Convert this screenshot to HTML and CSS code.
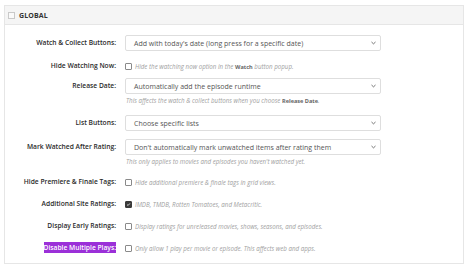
FILE: index.html
```html
<!DOCTYPE html>
<html>
<head>
<meta charset="utf-8">
<link rel="stylesheet" href="styles.css">
</head>
<body>
<div class="panel">
  <div class="panel-head">
    <span class="toggle"></span>
    <span class="panel-title">GLOBAL</span>
  </div>
  <div class="form">
    <div class="row sel">
      <div class="label">Watch &amp; Collect Buttons:</div>
      <div class="ctrl">
        <div class="select"><span>Add with today's date (long press for a specific date)</span><svg class="chev" viewBox="0 0 6 4" width="5" height="4"><path d="M0.6 0.8 L3 3 L5.4 0.8" fill="none" stroke="#666" stroke-width="1.1"/></svg></div>
      </div>
    </div>
    <div class="row chk">
      <div class="label">Hide Watching Now:</div>
      <div class="ctrl check-line"><span class="box"></span><span class="help">Hide the watching now option in the <b>Watch</b> button popup.</span></div>
    </div>
    <div class="row sel">
      <div class="label">Release Date:</div>
      <div class="ctrl">
        <div class="select"><span>Automatically add the episode runtime</span><svg class="chev" viewBox="0 0 6 4" width="5" height="4"><path d="M0.6 0.8 L3 3 L5.4 0.8" fill="none" stroke="#666" stroke-width="1.1"/></svg></div>
        <div class="help below">This affects the watch &amp; collect buttons when you choose <b>Release Date</b>.</div>
      </div>
    </div>
    <div class="row sel">
      <div class="label">List Buttons:</div>
      <div class="ctrl">
        <div class="select"><span>Choose specific lists</span><svg class="chev" viewBox="0 0 6 4" width="5" height="4"><path d="M0.6 0.8 L3 3 L5.4 0.8" fill="none" stroke="#666" stroke-width="1.1"/></svg></div>
      </div>
    </div>
    <div class="row sel">
      <div class="label">Mark Watched After Rating:</div>
      <div class="ctrl">
        <div class="select"><span>Don't automatically mark unwatched items after rating them</span><svg class="chev" viewBox="0 0 6 4" width="5" height="4"><path d="M0.6 0.8 L3 3 L5.4 0.8" fill="none" stroke="#666" stroke-width="1.1"/></svg></div>
        <div class="help below">This only applies to movies and episodes you haven't watched yet.</div>
      </div>
    </div>
    <div class="row chk">
      <div class="label">Hide Premiere &amp; Finale Tags:</div>
      <div class="ctrl check-line"><span class="box"></span><span class="help">Hide additional premiere &amp; finale tags in grid views.</span></div>
    </div>
    <div class="row chk">
      <div class="label">Additional Site Ratings:</div>
      <div class="ctrl check-line"><span class="box checked"><svg viewBox="0 0 8 8" width="7" height="7"><path d="M1.8 4.2 L3.3 5.6 L6.2 2.3" fill="none" stroke="#fff" stroke-width="1.3"/></svg></span><span class="help">IMDB, TMDB, Rotten Tomatoes, and Metacritic.</span></div>
    </div>
    <div class="row chk">
      <div class="label">Display Early Ratings:</div>
      <div class="ctrl check-line"><span class="box"></span><span class="help">Display ratings for unreleased movies, shows, seasons, and episodes.</span></div>
    </div>
    <div class="row chk">
      <div class="label"><span class="mark">Disable Multiple Plays:</span></div>
      <div class="ctrl check-line"><span class="box"></span><span class="help">Only allow 1 play per movie or episode. This affects web and apps.</span></div>
    </div>
  </div>
</div>
</body>
</html>
```
FILE: styles.css
```css
html, body {
  margin: 0;
  padding: 0;
  background: #ffffff;
}
body {
  padding: 5px 10px 0 4px;
  font-family: "Open Sans", "Noto Sans", sans-serif;
  color: #333;
}
.panel {
  border: 1px solid #e6e6e6;
  background: #fff;
}
.panel-head {
  height: 18px;
  background: #f5f5f5;
  border-bottom: 1px solid #e6e6e6;
  display: flex;
  align-items: center;
  padding-left: 3px;
  gap: 4px;
}
.toggle {
  width: 5px;
  height: 5px;
  border: 1px solid #c9c9c9;
  background: #fafafa;
}
.panel-title {
  font-size: 7px;
  font-weight: 700;
  color: #333;
  letter-spacing: 0.1px;
}
.form {
  padding: 10px 0 8px 0;
  display: flex;
  flex-direction: column;
}
.row {
  display: grid;
  grid-template-columns: 111px 256px;
  column-gap: 9px;
  align-items: start;
  margin-top: 8px;
}
.row:first-child {
  margin-top: 0;
}
.row.chk + .row.sel {
  margin-top: 5px;
}
.label {
  text-align: right;
  font-size: 6.7px;
  font-weight: 600;
  color: #2b2b2b;
  white-space: nowrap;
}
.row.sel .label {
  line-height: 16px;
}
.row.chk .label {
  line-height: 14px;
}
.mark {
  background: #9b30d8;
  color: #fff;
  padding: 1px 0;
}
.select {
  height: 16px;
  box-sizing: border-box;
  border: 1px solid #dedede;
  border-radius: 2px;
  display: flex;
  align-items: center;
  justify-content: space-between;
  padding: 0 4px 0 8px;
  font-size: 7px;
  color: #555;
  white-space: nowrap;
}
.chev {
  display: block;
}
.check-line {
  height: 14px;
  display: flex;
  align-items: center;
  gap: 3px;
}
.box {
  width: 7px;
  height: 7px;
  box-sizing: border-box;
  border: 1px solid #8a8a8a;
  border-radius: 1px;
  background: #fff;
  display: flex;
  align-items: center;
  justify-content: center;
  flex: none;
}
.box.checked {
  background: #3a3a3a;
  border-color: #3a3a3a;
}
.box.checked svg {
  display: block;
}
.help {
  font-size: 6.2px;
  font-style: italic;
  color: #a0a0a0;
  white-space: nowrap;
}
.help b {
  font-style: normal;
  font-weight: 700;
  font-size: 0.9em;
  color: #666;
}
.help.below {
  line-height: 11px;
  margin-top: 1px;
  padding-left: 1px;
}
```
